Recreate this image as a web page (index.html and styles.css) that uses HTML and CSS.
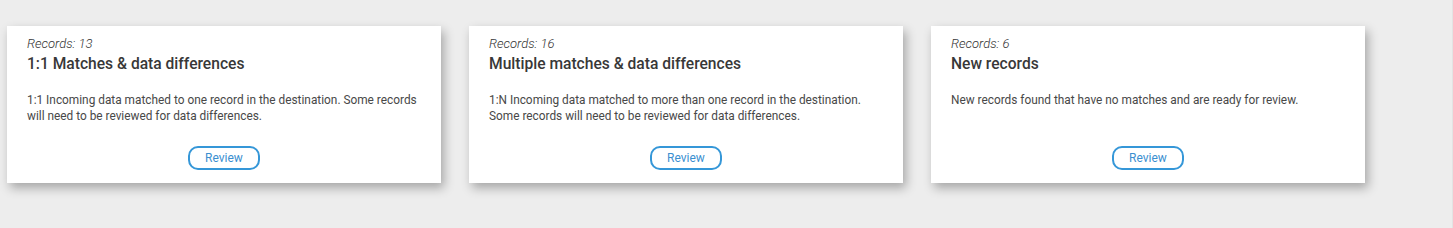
FILE: index.html
```html
<!DOCTYPE html>
<html>
<head>
    <title>Match summary</title>
    <link rel="stylesheet" href="styles.css">
</head>
<body>
    <div class="cards">
        <!-- 1:1 -->
        <div class="card">
            <div class="count">Records: 13</div>
            <h2>1:1 Matches &amp; data differences</h2>
            <p>1:1 Incoming data matched to one record in the destination. Some records will need to be reviewed for data differences.</p>
            <div class="actions"><button type="button">Review</button></div>
        </div>

        <!-- 1:N -->
        <div class="card">
            <div class="count">Records: 16</div>
            <h2>Multiple matches &amp; data differences</h2>
            <p>1:N Incoming data matched to more than one record in the destination. Some records will need to be reviewed for data differences.</p>
            <div class="actions"><button type="button">Review</button></div>
        </div>

        <!-- new -->
        <div class="card">
            <div class="count">Records: 6</div>
            <h2>New records</h2>
            <p>New records found that have no matches and are ready for review.</p>
            <div class="actions"><button type="button">Review</button></div>
        </div>
    </div>
</body>
</html>
```

FILE: styles.css
```css
html, body { margin: 0; height: 100%; }
body { background: #ededed; font-family: Roboto, "Liberation Sans", sans-serif; color: #333; border-right: 1px solid #e3e3e3; box-sizing: border-box; }
.cards { display: flex; gap: 28px; padding: 26px 0 0 7px; }
.card { width: 434px; height: 157px; box-sizing: border-box; background: #fff; padding: 10px 20px 13px 20px; display: flex; flex-direction: column; box-shadow: 3px 5px 10px rgba(0,0,0,0.3); }
.count { font-size: 13px; font-style: italic; font-weight: 300; line-height: 16px; color: #333; }
h2 { margin: 0; font-size: 15.6px; font-weight: 500; line-height: 24px; color: #383838; }
p { margin: 16px 0 0 0; font-size: 11.85px; line-height: 16px; color: #484848; }
.actions { margin-top: auto; text-align: center; }
button { width: 72px; height: 24px; padding: 0; background: #fff; border: 2px solid #3597d8; border-radius: 10px; color: #3b8fd0; font-family: Roboto, "Liberation Sans", sans-serif; font-size: 12px; cursor: pointer; }
```
